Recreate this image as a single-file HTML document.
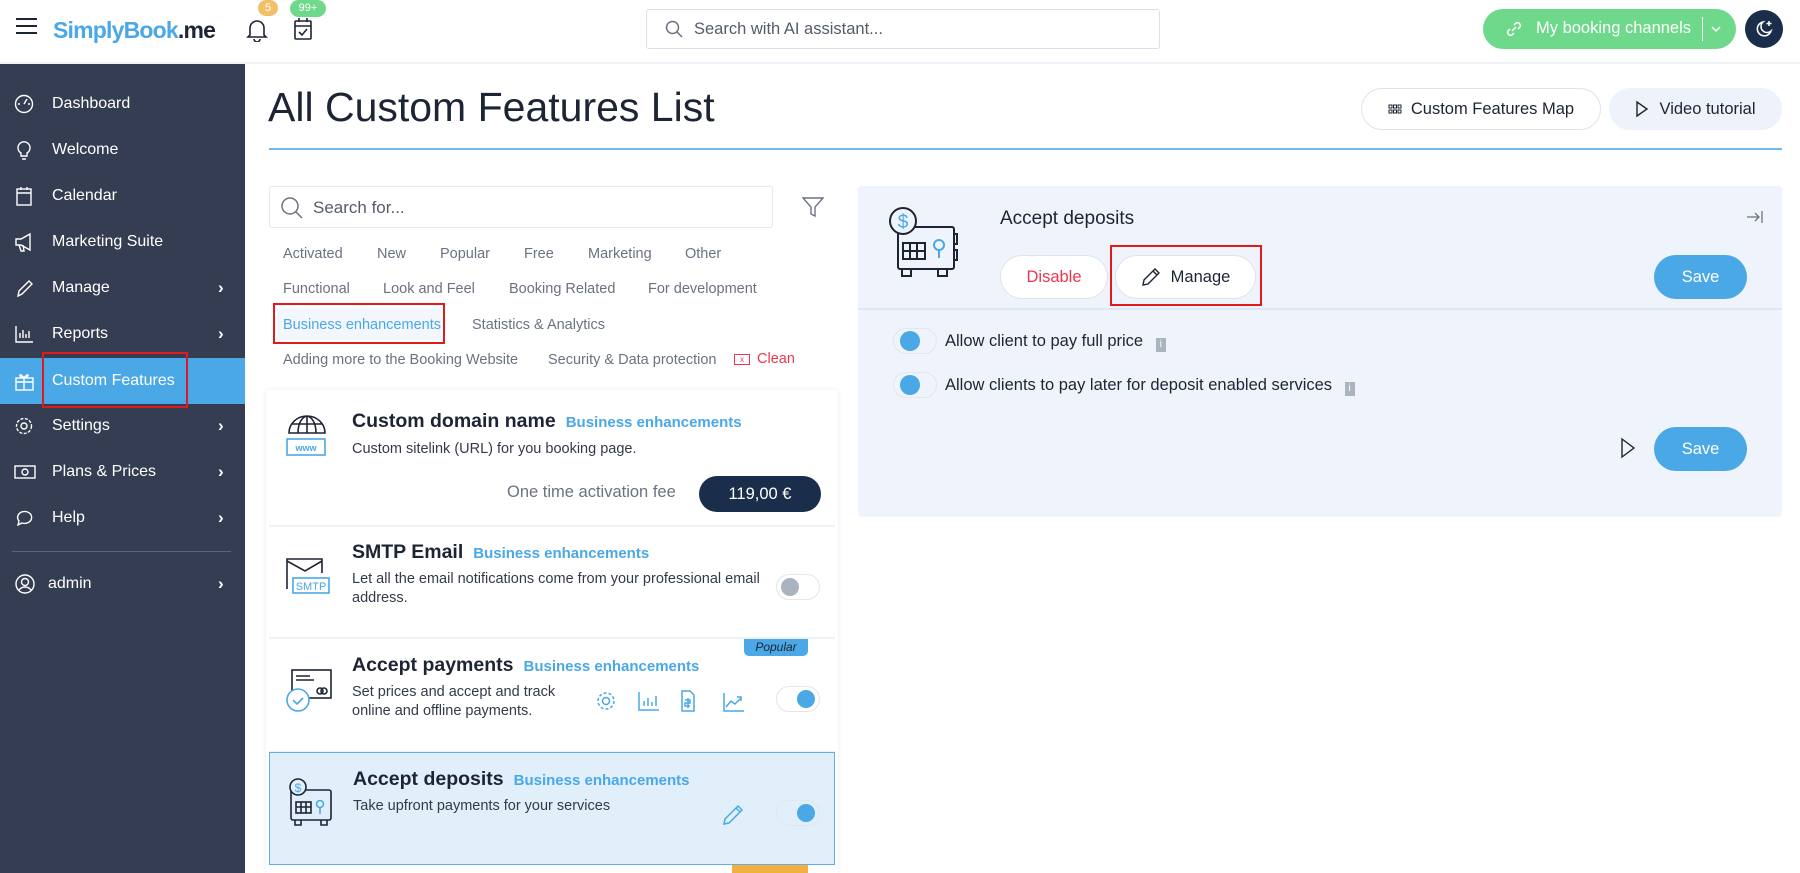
<!DOCTYPE html>
<html><head><meta charset="utf-8"><style>
*{box-sizing:border-box;margin:0;padding:0}
body{width:1800px;height:873px;overflow:hidden;background:#fff;font-family:"Liberation Sans",sans-serif;color:#1d2434;position:relative}
.abs{position:absolute}
.hdr{left:0;top:0;width:1800px;height:64px;background:#fff;border-bottom:2px solid #eef1f6}
.side{left:0;top:64px;width:245px;height:809px;background:#343d51}
.nav{position:absolute;left:0;width:245px;height:46px;color:#fff;font-size:16px;display:flex;align-items:center}
.nav .ic{position:absolute;left:14px;top:13px;width:22px;height:20px}
.nav span{position:absolute;left:52px}
.nav .ch{position:absolute;left:218px;font-size:17px}
.tag{position:absolute;font-size:14.5px;color:#6b7280}
.card{position:absolute;left:269px;width:566px;background:#fff;border-bottom:2px solid #eef1f6}
.ct{position:absolute;left:83px;font-size:19.5px;font-weight:bold;color:#1d2434;white-space:nowrap}
.ct b{color:#4aa8e6;font-size:15px;margin-left:10px;font-weight:bold}
.cd{position:absolute;left:83px;font-size:14.5px;color:#333a48;line-height:19px}
.tog{position:absolute;width:44px;height:26px;border:1.5px solid #e3e6eb;border-radius:13px;background:#fff}
.tog i{position:absolute;top:3px;width:18px;height:18px;border-radius:50%;background:#4aa8e6}
.btn{position:absolute;border:1.5px solid #dfe3ea;border-radius:22px;background:#fff;display:flex;align-items:center;justify-content:center;font-size:16.5px}
.save{position:absolute;width:93px;height:44px;border-radius:22px;background:#4aa8e6;color:#fff;font-size:16.5px;display:flex;align-items:center;justify-content:center}
</style></head><body>
<div class="abs hdr">
 <svg class="abs" style="left:16px;top:17px" width="22" height="18"><path d="M0 2H21M0 9H21M0 16H21" stroke="#1d2434" stroke-width="2"/></svg>
 <div class="abs" style="left:53px;top:17px;font-size:23px;font-weight:bold;letter-spacing:-0.8px"><span style="color:#4aa8e6">SimplyBook</span><span style="color:#1d2434">.me</span></div>
 <svg class="abs" style="left:246px;top:18px" width="22" height="24" fill="none" stroke="#1d2434" stroke-width="1.6"><path d="M4 17V10a7 7 0 0 1 14 0v7l2 2H2z M8 21a3 3 0 0 0 6 0"/></svg>
 <div class="abs" style="left:258px;top:0;width:20px;height:16px;border-radius:8px;background:#f3c069;color:#fff;font-size:11px;text-align:center;line-height:16px">5</div>
 <svg class="abs" style="left:293px;top:17px" width="20" height="24" fill="none" stroke="#1d2434" stroke-width="1.6"><rect x="2" y="4" width="16" height="18" rx="1"/><path d="M2 9H18M6 15l3 3 5-6M6 1v4M14 1v4"/></svg>
 <div class="abs" style="left:290px;top:0;width:36px;height:17px;border-radius:9px;background:#6ed98a;color:#fff;font-size:11px;text-align:center;line-height:17px">99+</div>
 <div class="abs" style="left:646px;top:9px;width:514px;height:40px;border:1.5px solid #dcdfe5;border-radius:3px">
  <svg class="abs" style="left:18px;top:10px" width="18" height="18" fill="none" stroke="#6b7280" stroke-width="1.5"><circle cx="7.5" cy="7.5" r="6"/><path d="M12 12l5 5"/></svg>
  <span class="abs" style="left:47px;top:10px;font-size:16.5px;color:#555c68">Search with AI assistant...</span></div>
 <div class="abs" style="left:1483px;top:9px;width:253px;height:40px;border-radius:20px;background:#6ed98a;color:#fff;font-size:16.5px">
  <svg class="abs" style="left:22px;top:11px" width="18" height="18" fill="none" stroke="#fff" stroke-width="1.5"><path d="M7 11l4-4M5 9l-2 2a3 3 0 0 0 4 4l2-2M13 9l2-2a3 3 0 0 0-4-4L9 5"/></svg>
  <span class="abs" style="left:53px;top:10px">My booking channels</span>
  <div class="abs" style="left:219px;top:8px;width:1px;height:24px;background:#fff"></div>
  <svg class="abs" style="left:228px;top:17px" width="10" height="7" fill="none" stroke="#fff" stroke-width="1.4"><path d="M1 1l4 4 4-4"/></svg></div>
 <div class="abs" style="left:1745px;top:10px;width:38px;height:38px;border-radius:50%;background:#1a2d4a">
  <svg class="abs" style="left:9px;top:9px" width="20" height="20" fill="none" stroke="#fff" stroke-width="1.5"><path d="M9 3a7 7 0 1 0 8 9A6 6 0 0 1 9 3z"/><path d="M15 2v5M12.5 4.5h5"/></svg></div>
</div>

<div class="abs side"></div>
<div class="nav" style="top:81px"><svg class="ic" fill="none" stroke="#fff" stroke-width="1.4"><circle cx="10" cy="10" r="8.5"/><path d="M10 10l3-5M4 10h2M14 10h2"/></svg><span>Dashboard</span></div>
<div class="nav" style="top:127px"><svg class="ic" fill="none" stroke="#fff" stroke-width="1.4"><path d="M7 13a6 6 0 1 1 6 0v3H7zM8 19h4"/></svg><span>Welcome</span></div>
<div class="nav" style="top:173px"><svg class="ic" fill="none" stroke="#fff" stroke-width="1.4"><rect x="3" y="3" width="14" height="16"/><path d="M3 7h14M7 1v3M13 1v3"/></svg><span>Calendar</span></div>
<div class="nav" style="top:219px"><svg class="ic" fill="none" stroke="#fff" stroke-width="1.4"><path d="M2 7h5l9-5v16l-9-5H2zM5 13l2 6h3l-1-6"/></svg><span>Marketing Suite</span></div>
<div class="nav" style="top:265px"><svg class="ic" fill="none" stroke="#fff" stroke-width="1.4"><path d="M4 18l1-5L15 3l3 3L8 16z"/></svg><span>Manage</span><b class="ch">›</b></div>
<div class="nav" style="top:311px"><svg class="ic" fill="none" stroke="#fff" stroke-width="1.4"><path d="M2 2v16h17M6 14V9M9 14V6M12 14V10M15 14V7"/></svg><span>Reports</span><b class="ch">›</b></div>
<div class="nav" style="top:358px;background:#4aa8e6"><svg class="ic" fill="none" stroke="#fff" stroke-width="1.4"><rect x="2" y="7" width="17" height="12"/><path d="M10 7v12M2 11h17M10 7C6 1 3 5 10 7c7-2 4-6 0 0"/></svg><span>Custom Features</span></div>
<div class="abs" style="left:42px;top:352px;width:146px;height:56px;border:2px solid #e01b1b"></div>
<div class="nav" style="top:403px"><svg class="ic" fill="none" stroke="#fff" stroke-width="1.4"><circle cx="10" cy="10" r="3"/><circle cx="10" cy="10" r="7.5" stroke-dasharray="3 1.5"/></svg><span>Settings</span><b class="ch">›</b></div>
<div class="nav" style="top:449px"><svg class="ic" fill="none" stroke="#fff" stroke-width="1.4"><rect x="1" y="4" width="20" height="12"/><circle cx="11" cy="10" r="3"/></svg><span>Plans &amp; Prices</span><b class="ch">›</b></div>
<div class="nav" style="top:495px"><svg class="ic" fill="none" stroke="#fff" stroke-width="1.4"><path d="M4 17l1-4a7 6 0 1 1 3 2z"/></svg><span>Help</span><b class="ch">›</b></div>
<div class="abs" style="left:12px;top:551px;width:219px;height:1px;background:#5a6377"></div>
<div class="nav" style="top:561px"><svg class="ic" fill="none" stroke="#fff" stroke-width="1.4"><circle cx="11" cy="10" r="9"/><circle cx="11" cy="8" r="3.5"/><path d="M5 16c3-4 9-4 12 0"/></svg><span style="left:48px">admin</span><b class="ch">›</b></div>

<div class="abs" style="left:268px;top:84px;font-size:41px;color:#1d2434">All Custom Features List</div>
<div class="btn" style="left:1361px;top:88px;width:240px;height:42px;font-size:16.5px"><svg width="14" height="10" fill="none" stroke="#1d2434" stroke-width="1" style="margin-right:9px"><rect x="1" y="1" width="3" height="3"/><rect x="5.5" y="1" width="3" height="3"/><rect x="10" y="1" width="3" height="3"/><rect x="1" y="6" width="3" height="3"/><rect x="5.5" y="6" width="3" height="3"/><rect x="10" y="6" width="3" height="3"/></svg>Custom Features Map</div>
<div class="btn" style="left:1609px;top:88px;width:173px;height:42px;border-color:#eef3fb;background:#eef3fb"><svg width="14" height="18" fill="none" stroke="#1d2434" stroke-width="1.4" style="margin-right:10px"><path d="M2 2v14l10-7z"/></svg>Video tutorial</div>
<div class="abs" style="left:269px;top:148px;width:1513px;height:2px;background:#6cbcf0"></div>

<div class="abs" style="left:269px;top:186px;width:504px;height:42px;border:1.5px solid #e5e8ee;border-radius:3px">
 <svg class="abs" style="left:10px;top:9px" width="24" height="24" fill="none" stroke="#6b7280" stroke-width="1.5"><circle cx="10" cy="10" r="8"/><path d="M16 16l6 6"/></svg>
 <span class="abs" style="left:43px;top:11px;font-size:17px;color:#555c68">Search for...</span></div>
<svg class="abs" style="left:802px;top:196px" width="22" height="22" fill="none" stroke="#6b7280" stroke-width="1.4"><path d="M1 2h20l-8 9v9l-4-2v-7z"/></svg>
<div class="tag" style="left:283px;top:246px">Activated</div><div class="tag" style="left:377px;top:246px">New</div><div class="tag" style="left:440px;top:246px">Popular</div><div class="tag" style="left:524px;top:246px">Free</div><div class="tag" style="left:588px;top:246px">Marketing</div><div class="tag" style="left:685px;top:246px">Other</div>
<div class="tag" style="left:283px;top:281px">Functional</div><div class="tag" style="left:383px;top:281px">Look and Feel</div><div class="tag" style="left:509px;top:281px">Booking Related</div><div class="tag" style="left:648px;top:281px">For development</div>
<div class="abs" style="left:277px;top:308px;width:164px;height:32px;background:#f3f7fd"></div>
<div class="tag" style="left:283px;top:317px;color:#4aa8e6">Business enhancements</div><div class="tag" style="left:472px;top:317px">Statistics &amp; Analytics</div>
<div class="abs" style="left:273px;top:303px;width:172px;height:41px;border:2px solid #e01b1b"></div>
<div class="tag" style="left:283px;top:352px">Adding more to the Booking Website</div><div class="tag" style="left:548px;top:352px">Security &amp; Data protection</div>
<div class="tag" style="left:734px;top:351px;color:#e8384f"><span style="display:inline-block;width:16px;height:11px;border:1.3px solid #e8384f;font-size:8px;line-height:9px;text-align:center;margin-right:7px;vertical-align:1px">x</span>Clean</div>

<div class="abs" style="left:266px;top:390px;width:572px;height:483px;box-shadow:0 0 5px rgba(0,0,0,.08)"></div>
<div class="card" style="top:391px;height:136px">
 <svg class="abs" style="left:16px;top:22px" width="48" height="46" fill="none" stroke="#1d2434" stroke-width="1.6"><path d="M4 20a18 17 0 0 1 36 0H4zM22 3v17M13 20c0-10 4-16 9-17 5 1 9 7 9 17M7 11h30"/><rect x="2" y="26" width="38" height="16" stroke="#4aa8e6"/><text x="21" y="38" text-anchor="middle" font-size="9" font-weight="bold" fill="#4aa8e6" stroke="none" font-family="Liberation Sans">www</text></svg>
 <div class="ct" style="top:19px">Custom domain name<b>Business enhancements</b></div>
 <div class="cd" style="top:49px">Custom sitelink (URL) for you booking page.</div>
 <div class="abs" style="left:238px;top:92px;font-size:16.5px;color:#6b7280">One time activation fee</div>
 <div class="abs" style="left:430px;top:85px;width:122px;height:36px;border-radius:18px;background:#1a2d4a;color:#fff;font-size:16.5px;text-align:center;line-height:36px">119,00 €</div>
</div>
<div class="card" style="top:527px;height:112px">
 <svg class="abs" style="left:16px;top:30px" width="46" height="40" fill="none" stroke="#1d2434" stroke-width="1.6"><path d="M2 32V2h35v14M2 4l18 10 17-10"/><rect x="8" y="21" width="36" height="15" fill="#fff" stroke="#4aa8e6"/><text x="26" y="33" text-anchor="middle" font-size="11" fill="#4aa8e6" stroke="none" font-family="Liberation Sans">SMTP</text></svg>
 <div class="ct" style="top:14px">SMTP Email<b>Business enhancements</b></div>
 <div class="cd" style="top:43px;width:425px">Let all the email notifications come from your professional email address.</div>
 <div class="tog" style="left:507px;top:47px"><i style="left:4px;background:#aab4c1"></i></div>
</div>
<div class="card" style="top:639px;height:114px">
 <div class="abs" style="left:475px;top:0;width:64px;height:17px;border-radius:0 0 5px 5px;background:#4aa8e6;font-size:12px;font-style:italic;text-align:center;line-height:17px;color:#1d2434">Popular</div>
 <svg class="abs" style="left:16px;top:28px" width="48" height="48" fill="none" stroke="#1d2434" stroke-width="1.6"><rect x="7" y="3" width="39" height="28"/><path d="M11 9h14M11 13h18"/><circle cx="35" cy="24" r="3"/><circle cx="39" cy="24" r="3"/><circle cx="13" cy="33" r="11" fill="#fff" stroke="#4aa8e6"/><path d="M8 33l4 4 6-6" stroke="#4aa8e6"/></svg>
 <div class="ct" style="top:15px">Accept payments<b>Business enhancements</b></div>
 <div class="cd" style="top:44px">Set prices and accept and track<br>online and offline payments.</div>
 <svg class="abs" style="left:327px;top:50px" width="210" height="24" fill="none" stroke="#4aa8e6" stroke-width="1.5"><circle cx="10" cy="12" r="3.5"/><circle cx="10" cy="12" r="8" stroke-dasharray="3 2"/><path d="M43 3v18h20M48 17v-5M52 17v-8M56 17v-4M60 17V7"/><path d="M86 2h8l4 4v16H86zM92 9v10M89 11h5v3h-5v3h5"/><path d="M128 4v18h20M130 18l5-6 4 3 6-6M141 8h4v4"/></svg>
 <div class="tog" style="left:507px;top:47px"><i style="left:20px"></i></div>
</div>
<div class="abs" style="left:269px;top:752px;width:566px;height:113px;background:#e1effb;border:1.5px solid #5eb0e8">
 <svg class="abs" style="left:15px;top:25px" width="52" height="50" fill="none" stroke="#1d2434" stroke-width="1.6"><rect x="6" y="12" width="40" height="30" rx="2"/><path d="M10 42v5h6v-5M36 42v5h6v-5"/><rect x="11" y="24" width="15" height="11"/><path d="M11 29h15M16 24v11M21 24v11"/><circle cx="35" cy="26" r="3.5" stroke="#4aa8e6"/><path d="M35 30v6" stroke="#4aa8e6"/><circle cx="13" cy="9" r="8" fill="#e1effb"/><text x="13" y="14" text-anchor="middle" font-size="12" fill="#4aa8e6" stroke="none" font-family="Liberation Sans">$</text></svg>
 <div class="ct" style="top:15px">Accept deposits<b>Business enhancements</b></div>
 <div class="cd" style="top:44px">Take upfront payments for your services</div>
 <svg class="abs" style="left:451px;top:50px" width="24" height="24" fill="none" stroke="#4aa8e6" stroke-width="1.5"><path d="M3 21l1-5L17 3l4 4L8 20zM15 5l4 4"/></svg>
 <div class="tog" style="left:506px;top:47px;background:#e1effb"><i style="left:20px"></i></div>
</div>
<div class="abs" style="left:732px;top:865px;width:76px;height:8px;background:#f3b03e"></div>

<div class="abs" style="left:858px;top:186px;width:924px;height:331px;background:#eff4fc;border-radius:4px">
 <div class="abs" style="left:0;top:122px;width:924px;height:1.5px;background:#e1e7f0"></div>
 <svg class="abs" style="left:30px;top:20px" width="74" height="72" fill="none" stroke="#1d2434" stroke-width="2"><rect x="10" y="21" width="56" height="42" rx="2"/><path d="M66 28h3v10h-3M66 44h3v10h-3M14 63v7h9v-7M50 63v7h9v-7"/><rect x="15" y="37" width="22" height="16"/><path d="M15 45h22M22 37v16M29 37v16"/><circle cx="51" cy="39" r="5" stroke="#4aa8e6"/><path d="M51 44v8" stroke="#4aa8e6"/><circle cx="15" cy="15" r="13" fill="#eff4fc"/><text x="15" y="22" text-anchor="middle" font-size="19" fill="#4aa8e6" stroke="none" font-family="Liberation Sans">$</text></svg>
 <div class="abs" style="left:142px;top:22px;font-size:19px;color:#1d2434">Accept deposits</div>
 <svg class="abs" style="left:888px;top:24px" width="18" height="14" fill="none" stroke="#6b7280" stroke-width="1.3"><path d="M1 7h12M9 3l4 4-4 4M16 1v12"/></svg>
 <div class="btn" style="left:142px;top:69px;width:108px;height:44px;color:#e8384f">Disable</div>
 <div class="btn" style="left:257px;top:69px;width:141px;height:44px"><svg width="20" height="20" fill="none" stroke="#1d2434" stroke-width="1.4" style="margin-right:10px"><path d="M2 18l1-5L14 2l4 4L7 17zM12 4l4 4"/></svg>Manage</div>
 <div class="abs" style="left:252px;top:59px;width:152px;height:61px;border:2px solid #e01b1b"></div>
 <div class="save" style="left:796px;top:69px">Save</div>
 <div class="tog" style="left:35px;top:142px;background:#eff4fc"><i style="left:6px;width:20px;height:20px;top:2px"></i></div>
 <div class="abs" style="left:87px;top:146px;font-size:16.5px">Allow client to pay full price <span style="display:inline-block;width:10px;height:14px;background:#aab4c1;color:#fff;font-size:10px;text-align:center;line-height:14px;margin-left:8px;vertical-align:-1px">i</span></div>
 <div class="tog" style="left:35px;top:186px;background:#eff4fc"><i style="left:6px;width:20px;height:20px;top:2px"></i></div>
 <div class="abs" style="left:87px;top:190px;font-size:16.5px">Allow clients to pay later for deposit enabled services <span style="display:inline-block;width:10px;height:14px;background:#aab4c1;color:#fff;font-size:10px;text-align:center;line-height:14px;margin-left:8px;vertical-align:-1px">i</span></div>
 <svg class="abs" style="left:762px;top:251px" width="16" height="22" fill="none" stroke="#1d2434" stroke-width="1.4"><path d="M2 2v18l12-9z"/></svg>
 <div class="save" style="left:796px;top:241px">Save</div>
</div>
</body></html>
